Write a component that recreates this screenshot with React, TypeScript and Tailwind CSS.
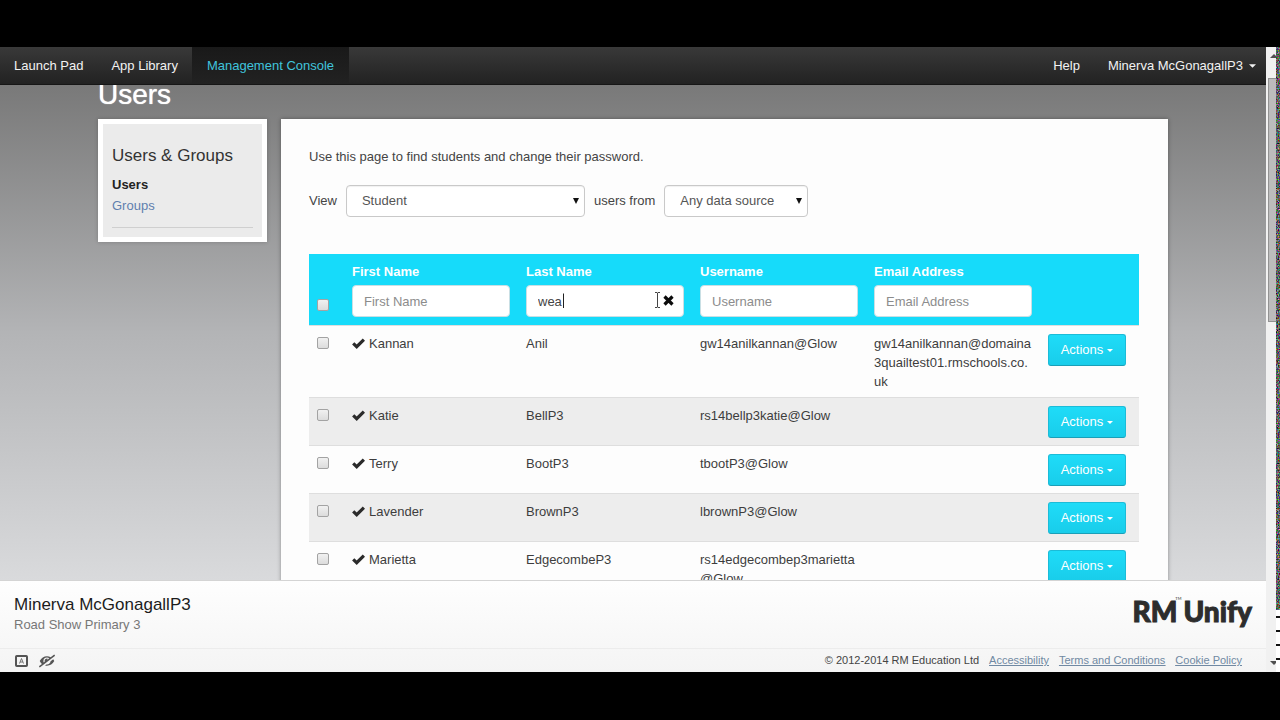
import React from "react";
import { FaEyeSlash } from "react-icons/fa";

type User = { first: string; last: string; username: string; email?: string };

const users: User[] = [
  { first: "Kannan", last: "Anil", username: "gw14anilkannan@Glow", email: "gw14anilkannan@domaina3quailtest01.rmschools.co.uk" },
  { first: "Katie", last: "BellP3", username: "rs14bellp3katie@Glow" },
  { first: "Terry", last: "BootP3", username: "tbootP3@Glow" },
  { first: "Lavender", last: "BrownP3", username: "lbrownP3@Glow" },
  { first: "Marietta", last: "EdgecombeP3", username: "rs14edgecombep3marietta@Glow" },
];

const columns = [
  { label: "First Name", value: "" },
  { label: "Last Name", value: "wea" },
  { label: "Username", value: "" },
  { label: "Email Address", value: "" },
];

function Tick() {
  return (
    <svg viewBox="0 0 13 11" className="h-[11px] w-[13px] shrink-0" aria-hidden="true">
      <path d="M1.2 5.400 L4.700 8.700 L11.900 1.700" fill="none" stroke="#2b2b2b" strokeWidth="3.200" />
    </svg>
  );
}

function Caret({ className }: { className: string }) {
  return (
    <svg viewBox="0 0 8 4" className={className} aria-hidden="true">
      <path d="M0 0H8L4 4Z" fill="currentColor" />
    </svg>
  );
}

function Box({ label }: { label: string }) {
  return (
    <input
      type="checkbox"
      aria-label={label}
      className="block size-3 appearance-none rounded-xs border border-[#a3a3a3] bg-linear-to-b from-[#f1f1f1] to-[#dcdcdc]"
    />
  );
}

function Picker({ id, option, className }: { id: string; option: string; className: string }) {
  return (
    <div className={`relative ${className}`}>
      <select
        id={id}
        className="h-8 w-full appearance-none rounded border border-[#c9c9c9] bg-white pr-6 pl-[15px] text-[#555] shadow-[inset_0_1px_1px_rgba(0,0,0,0.06)]"
      >
        <option>{option}</option>
      </select>
      <svg viewBox="0 0 6 6" className="pointer-events-none absolute top-[13px] right-1.5 size-1.5" aria-hidden="true">
        <path d="M0 0H6L3 6Z" fill="#111" />
      </svg>
    </div>
  );
}

function NavBar() {
  return (
    <nav className="flex h-[38px] shrink-0 items-stretch border-b border-[#161616] bg-linear-to-b from-[#393939] to-[#222] text-[#f2f2f2]">
      <a href="#launch" className="flex items-center px-3.5">Launch Pad</a>
      <a href="#apps" className="flex items-center px-3.5">App Library</a>
      <a href="#console" className="flex items-center bg-linear-to-b from-[#191919] to-[#222] px-[15px] text-[#40c4dc]">
        Management Console
      </a>
      <a href="#help" className="ml-auto flex items-center px-3.5">Help</a>
      <button type="button" className="flex items-center gap-1.5 pr-2.5 pl-3.5">
        Minerva McGonagallP3
        <Caret className="h-1 w-[7px]" />
      </button>
    </nav>
  );
}

function SideMenu() {
  return (
    <aside className="h-[123px] w-[169px] shrink-0 border-[5px] border-white bg-[#ebebeb] px-[9px] pt-5 shadow-[0_0_4px_rgba(0,0,0,0.2)]">
      <h2 className="text-[17px] leading-6 text-[#333]">Users &amp; Groups</h2>
      <ul className="border-b border-[#cfcfcf] pt-1.5 pb-[11px] leading-[21px]">
        <li className="font-bold text-[#222]">Users</li>
        <li><a href="#groups" className="text-[#5f7fae]">Groups</a></li>
      </ul>
    </aside>
  );
}

function UserTable() {
  return (
    <table className="mt-[37px] w-full table-fixed border-collapse text-left leading-[19px]">
      <colgroup>
        <col className="w-[35px]" />
        <col />
        <col />
        <col />
        <col />
        <col className="w-[99px]" />
      </colgroup>
      <thead className="bg-[#16dbfa] text-white">
        <tr>
          <th className="pb-3.5 pl-2 align-bottom"><Box label="Select all users" /></th>
          {columns.map((c) => (
            <th key={c.label} className="p-2 align-top font-bold">
              <label htmlFor={c.label} className="block">{c.label}</label>
              <div className="relative mt-1">
                <input
                  id={c.label}
                  type="text"
                  placeholder={c.label}
                  defaultValue={c.value}
                  className="block h-8 w-full rounded border border-[#c9dfe4] bg-white px-[11px] font-normal text-[#444] placeholder:text-[#8c8c8c]"
                />
                {c.value && (
                  <>
                    <svg viewBox="0 0 40 18" className="pointer-events-none absolute top-[7px] left-0 h-[18px] w-10" aria-hidden="true">
                      <path d="M37.5 1.5V16" stroke="#222" strokeWidth="1" />
                    </svg>
                    <svg viewBox="0 0 7 16" className="pointer-events-none absolute top-[7px] right-[23px] h-4 w-[7px]" aria-hidden="true">
                      <path d="M1 .5H3L3.500 1L4 .5H6M3.500 1V15M1 15.500H3L3.500 15L4 15.500H6" fill="none" stroke="#444" strokeWidth="1" />
                    </svg>
                    <button type="button" aria-label="Clear last name" className="absolute top-[10px] right-[10px]">
                      <svg viewBox="0 0 11 11" className="size-[11px]" aria-hidden="true">
                        <path d="M1.500 1.500L9.500 9.500M9.500 1.500L1.500 9.500" stroke="#0b0b0b" strokeWidth="3.200" />
                      </svg>
                    </button>
                  </>
                )}
              </div>
            </th>
          ))}
          <th aria-label="Actions" />
        </tr>
      </thead>
      <tbody className="text-[#3d3d3d]">
        {users.map((u) => (
          <tr key={u.username} className="border-t border-[#dedede] align-top even:bg-[#ededed]">
            <td className="pt-[11px] pl-2"><Box label={`Select ${u.first} ${u.last}`} /></td>
            <td className="px-2 pt-2 pb-1.5">
              <span className="flex items-center gap-1"><Tick />{u.first}</span>
            </td>
            <td className="px-2 pt-2 pb-1.5">{u.last}</td>
            <td className="px-2 pt-2 pb-1.5 break-all">{u.username}</td>
            <td className="px-2 pt-2 pb-1.5 break-all">{u.email}</td>
            <td className="px-2 pt-2 pb-[7px]">
              <button
                type="button"
                className="flex h-8 w-[78px] items-center justify-center gap-1 rounded-[3px] border border-[#1cbcd8] border-b-[#1a9fb8] bg-linear-to-b from-[#1fdcf8] to-[#19cdea] pb-0.5 text-white"
              >
                Actions
                <Caret className="mt-0.5 h-[3px] w-1.5" />
              </button>
            </td>
          </tr>
        ))}
      </tbody>
    </table>
  );
}

function Footer() {
  return (
    <footer className="shrink-0 border-t border-[#d4d4d4] bg-linear-to-b from-[#fefefe] to-[#f4f4f4]">
      <div className="flex h-[67px] items-start justify-between px-3.5">
        <div className="pt-3">
          <p className="text-[17px] leading-6 text-[#1c1c1c]">Minerva McGonagallP3</p>
          <p className="leading-4 text-[#777]">Road Show Primary 3</p>
        </div>
        <div className="flex gap-1.5 pt-3 font-['Lato',sans-serif] text-[28px] leading-9 font-black text-[#2d2d2d] [-webkit-text-stroke:1px_#2d2d2d] [stroke-linejoin:round]">
          <span className="relative">
            RM
            <span className="absolute top-1 -right-1 text-[4px] leading-none font-normal [-webkit-text-stroke:0]">TM</span>
          </span>
          <span>Unify</span>
        </div>
      </div>
      <div className="flex h-6 items-center border-t border-[#ececec] pr-6 pl-[15px] text-[11px] text-[#444]">
        <button type="button" aria-label="Text size">
          <svg viewBox="0 0 13 12" className="h-3 w-[13px]" aria-hidden="true">
            <rect x="1" y="1" width="11" height="10" rx=".8" fill="#f5f5f5" stroke="#555" strokeWidth="2" />
            <path d="M4.500 8.500L6.500 3.500L8.500 8.500M5.200 7H7.800" fill="none" stroke="#666" strokeWidth=".9" />
          </svg>
        </button>
        <button type="button" aria-label="Hide" className="ml-[11px] text-[#555]">
          <FaEyeSlash className="size-4 -scale-x-100" />
        </button>
        <p className="ml-auto">© 2012-2014 RM Education Ltd</p>
        <div className="ml-2.5 flex gap-2.5 text-[#7089a3] underline">
          <a href="#accessibility">Accessibility</a>
          <a href="#terms">Terms and Conditions</a>
          <a href="#cookies">Cookie Policy</a>
        </div>
      </div>
    </footer>
  );
}

function ScrollEdge() {
  return (
    <div className="flex w-3.5 shrink-0" aria-hidden="true">
      <div className="flex w-2.5 flex-col items-end bg-[#f1f1f1]">
        <svg viewBox="0 0 6 4" className="mt-[7px] h-1 w-1.5"><path d="M0 4L4 0L6 2V4Z" fill="#505050" /></svg>
        <div className="mt-5 h-[244px] w-2 border border-r-0 border-[#929292] bg-[#bcbcbc]" />
        <svg viewBox="0 0 6 4" className="mt-auto mb-[7px] h-1 w-1.5"><path d="M0 0H6V2L4 4Z" fill="#505050" /></svg>
      </div>
      <div className="flex w-1 flex-col">
        <svg className="min-h-0 w-1 flex-1">
          <filter id="static" x="0" y="0" width="100%" height="100%" colorInterpolationFilters="sRGB">
            <feTurbulence type="fractalNoise" baseFrequency="0.8" numOctaves="2" seed="4" />
            <feColorMatrix values="1.500 0 0 0 -.38  0 1.500 0 0 -.38  0 0 1.500 0 -.38  0 0 0 0 1" />
          </filter>
          <rect width="4" height="100%" filter="url(#static)" />
        </svg>
        <div className="h-[62px] bg-[repeating-linear-gradient(to_bottom,#fff_0,#fff_6px,#111_6px,#111_8px,#fff_8px,#fff_14px)]" />
      </div>
    </div>
  );
}

export default function App() {
  return (
    <div className="flex h-screen flex-col bg-black pt-[47px] pb-12 font-['Liberation_Sans',Arial,sans-serif] text-[13px]">
      <div className="flex min-h-0 flex-1">
        <div className="flex min-w-0 flex-1 flex-col">
          <NavBar />
          <main className="min-h-0 flex-1 overflow-hidden bg-linear-to-b from-[#797979] via-[#b3b4b6] via-50% to-[#d9dadc]">
            <div className="mx-auto max-w-[1070px]">
              <h1 className="-mt-1 mb-2.5 text-[28px] leading-7 text-white [text-shadow:0_0_1px_white]">Users</h1>
              <div className="flex items-start gap-3.5">
                <SideMenu />
                <section className="min-w-0 flex-1 bg-[#fdfdfd] pt-7 pr-[29px] pb-7 pl-7 shadow-[0_0_4px_rgba(0,0,0,0.35)]">
                  <p className="leading-5 text-[#444]">Use this page to find students and change their password.</p>
                  <div className="mt-[18px] flex items-center gap-[9px] text-[#444]">
                    <label htmlFor="role">View</label>
                    <Picker id="role" option="Student" className="w-[239px]" />
                    <label htmlFor="source">users from</label>
                    <Picker id="source" option="Any data source" className="w-36" />
                  </div>
                  <UserTable />
                </section>
              </div>
            </div>
          </main>
          <Footer />
        </div>
        <ScrollEdge />
      </div>
    </div>
  );
}
